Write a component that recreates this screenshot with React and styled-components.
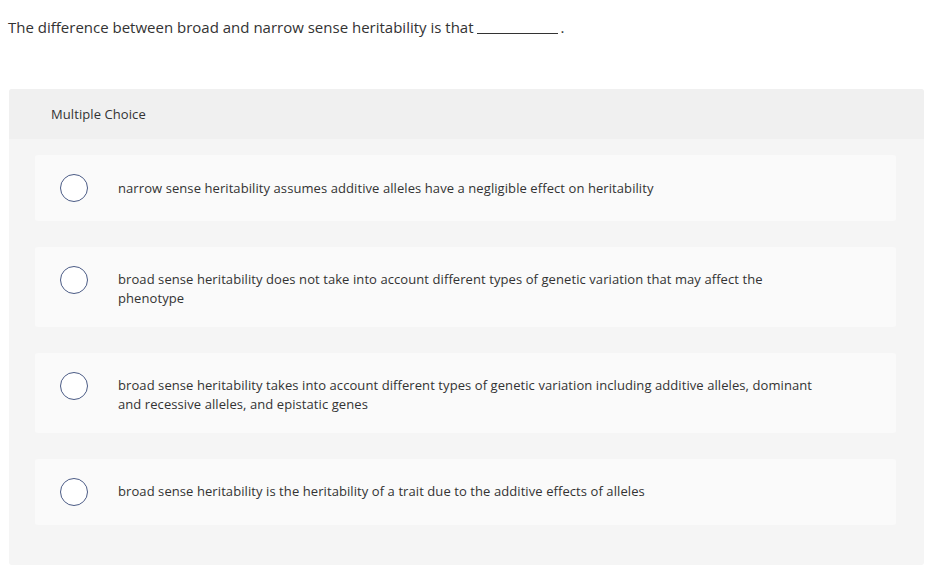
import React from "react";
import styled, { createGlobalStyle } from "styled-components";

const GlobalStyle = createGlobalStyle`
  body {
    margin: 0;
    background: #fff;
    font-family: "Open Sans", "Liberation Sans", Arial, sans-serif;
    color: #333;
  }
`;

const options = [
  "narrow sense heritability assumes additive alleles have a negligible effect on heritability",
  "broad sense heritability does not take into account different types of genetic variation that may affect the phenotype",
  "broad sense heritability takes into account different types of genetic variation including additive alleles, dominant and recessive alleles, and epistatic genes",
  "broad sense heritability is the heritability of a trait due to the additive effects of alleles",
];

const App = () => {
  return (
    <Page>
      <GlobalStyle />
      <Question>
        The difference between broad and narrow sense heritability is that <Blank />.
      </Question>
      <Panel>
        <Header>Multiple Choice</Header>
        <Body>
          {options.map((text) => (
            <Option key={text}>
              <Radio />
              <OptionText>{text}</OptionText>
            </Option>
          ))}
        </Body>
      </Panel>
    </Page>
  );
};

const Page = styled.div`
  padding: 17px 22px 14px 9px;
`;

const Question = styled.div`
  font-size: 15px;
  line-height: 20px;
  color: #333;
  margin-left: -1px;
`;

const Blank = styled.span`
  display: inline-block;
  width: 81px;
  border-bottom: 1px solid #333;
  vertical-align: -1px;
  margin-right: 2px;
`;

const Panel = styled.div`
  margin-top: 52px;
  background: #f5f5f5;
  border-radius: 3px;
  overflow: hidden;
`;

const Header = styled.div`
  height: 50px;
  display: flex;
  align-items: center;
  padding-left: 42px;
  background: #f0f0f0;
  font-size: 13px;
  letter-spacing: 0.08px;
  color: #333;
`;

const Body = styled.div`
  display: flex;
  flex-direction: column;
  gap: 25.5px;
  padding: 16px 28px 40px 26px;
`;

const Option = styled.div`
  display: flex;
  align-items: flex-start;
  padding: 19px 0 19px 25px;
  background: #fafafa;
  border-radius: 3px;
`;

const Radio = styled.span`
  flex: none;
  width: 28px;
  height: 28px;
  box-sizing: border-box;
  border: 1.5px solid #4b5b85;
  border-radius: 50%;
  background: #fff;
`;

const OptionText = styled.div`
  margin-left: 30px;
  padding-top: 4.5px;
  width: 700px;
  font-size: 13px;
  letter-spacing: 0.08px;
  line-height: 19px;
  color: #333;
`;

export default App;
